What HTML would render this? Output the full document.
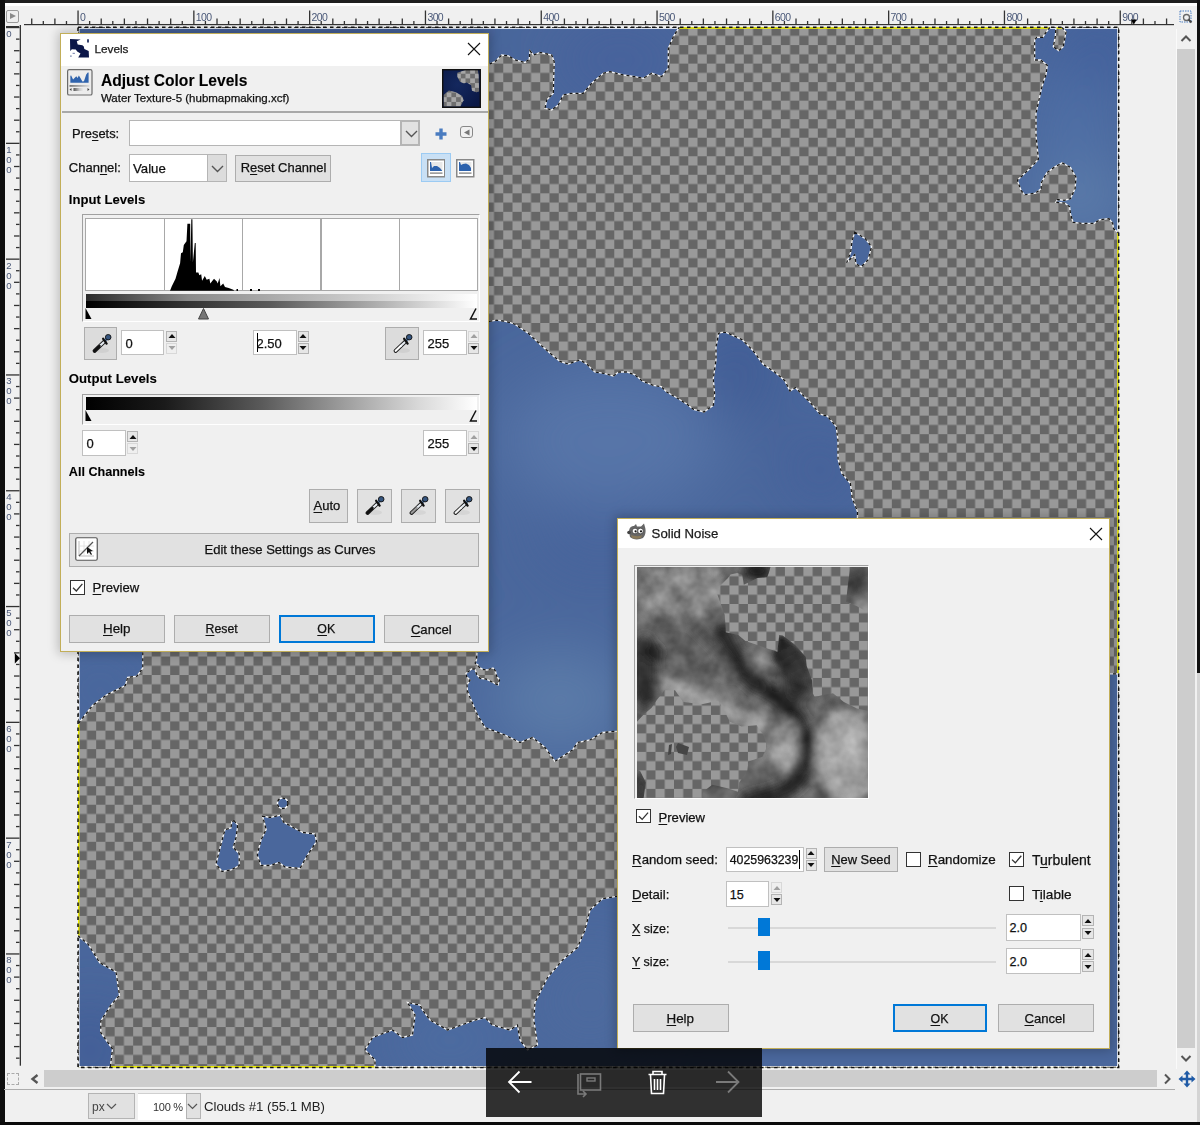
<!DOCTYPE html><html><head><meta charset="utf-8"><style>html,body{margin:0;padding:0;width:1200px;height:1125px;overflow:hidden;background:#f0f0f0;position:relative;font-family:"Liberation Sans",sans-serif}</style></head><body>
<svg width="1200" height="1125" style="position:absolute;left:0;top:0">
<defs>
<pattern id="chk" x="77.66" y="26.56" width="18.504" height="18.528" patternUnits="userSpaceOnUse"><rect width="18.504" height="18.528" fill="#999"/><rect x="9.252" width="9.252" height="9.264" fill="#666"/><rect y="9.264" width="9.252" height="9.264" fill="#666"/></pattern>
<clipPath id="water"><path d="M78.0,27.3 L679.2,27.3 L673.3,36.7 L668.3,48.3 L668.3,68.3 L661.7,76.7 L651.7,73.3 L643.3,78.3 L635.0,76.7 L623.3,75.0 L610.0,71.7 L603.3,73.3 L591.7,83.3 L583.3,93.3 L571.7,93.3 L563.3,95.0 L558.3,105.0 L551.7,110.0 L545.0,108.3 L546.7,100.0 L553.3,93.3 L554.2,61.7 L551.7,55.0 L540.0,52.5 L533.3,55.0 L530.0,50.8 L529.2,59.2 L525.0,62.5 L515.0,60.0 L508.3,55.8 L501.7,55.0 L495.0,61.7 L489.2,64.2 L470.0,64.0 L470.0,40.0 L78.0,40.0 Z M1050.0,27.3 L1045.3,33.3 L1042.7,37.3 L1036.7,37.3 L1034.7,40.0 L1034.7,60.0 L1040.7,60.0 L1047.3,65.3 L1046.0,74.7 L1044.0,80.0 L1041.3,89.3 L1036.0,113.3 L1036.0,134.7 L1037.5,150.0 L1038.4,159.2 L1030.2,168.3 L1017.3,180.2 L1021.0,190.3 L1024.7,194.9 L1035.7,193.1 L1041.2,188.5 L1041.2,183.0 L1046.7,172.9 L1054.0,167.4 L1062.2,162.8 L1070.5,167.4 L1076.0,177.5 L1075.1,188.5 L1070.5,198.6 L1064.1,200.4 L1057.7,199.5 L1055.8,202.2 L1065.0,203.2 L1069.6,206.8 L1070.5,214.2 L1073.2,222.4 L1081.5,223.3 L1094.3,223.3 L1099.8,219.7 L1109.0,218.7 L1112.7,223.3 L1113.6,228.8 L1118.7,233.0 L1118.7,27.3 L1062.0,27.3 L1066.0,32.0 L1063.3,46.7 L1058.7,50.7 L1053.3,46.7 L1055.3,36.7 L1056.0,27.3 Z M489.3,321.3 L496.7,320.2 L505.6,321.3 L514.4,324.0 L527.8,332.9 L541.0,345.3 L554.4,356.9 L560.0,361.3 L568.0,364.0 L580.0,360.0 L586.7,364.0 L594.7,372.0 L604.0,373.3 L613.3,376.0 L618.7,372.0 L626.7,372.0 L634.7,374.7 L642.7,381.3 L653.3,385.3 L661.3,386.7 L666.7,392.0 L676.0,397.3 L686.7,404.0 L693.3,409.3 L704.0,412.0 L713.3,405.3 L714.7,394.7 L713.3,378.7 L716.0,360.0 L716.0,346.7 L718.7,333.3 L722.0,332.4 L726.0,332.4 L742.0,339.6 L752.7,350.2 L763.3,364.4 L774.0,371.6 L784.7,380.4 L790.0,391.1 L795.3,387.6 L809.6,401.8 L820.2,414.2 L827.3,416.0 L836.2,426.7 L838.0,440.9 L838.0,458.7 L841.6,472.9 L850.4,483.6 L852.2,497.8 L857.6,512.0 L857.0,530.0 L630.0,530.0 L630.0,731.3 L616.3,731.3 L602.5,732.5 L590.0,740.0 L577.5,742.5 L572.5,750.0 L555.0,761.3 L545.0,747.5 L532.5,737.5 L520.0,742.5 L505.0,735.0 L485.0,727.5 L477.5,715.0 L470.0,697.5 L467.5,691.0 L467.0,685.0 L470.0,680.0 L466.5,676.5 L466.0,673.5 L471.5,669.0 L475.0,669.0 L476.5,674.0 L480.0,678.5 L486.0,679.0 L492.0,682.0 L498.0,685.0 L499.5,680.0 L496.5,676.0 L495.5,671.0 L493.0,668.0 L487.0,670.0 L483.0,669.5 L479.0,667.0 L478.0,665.0 L476.5,664.0 L475.0,663.0 L476.5,660.0 L477.0,653.0 L477.5,645.0 L480.0,645.0 L480.0,321.3 Z M630.0,896.3 L616.3,896.3 L602.5,898.8 L590.0,910.0 L585.0,930.0 L577.5,947.5 L562.5,960.0 L547.5,977.5 L535.0,1002.5 L533.8,1020.0 L537.5,1045.0 L527.5,1050.0 L520.0,1040.0 L517.5,1025.0 L510.0,1030.0 L492.5,1025.0 L485.0,1017.5 L475.0,1020.0 L447.5,1030.0 L430.0,1020.0 L422.5,1010.0 L420.0,1005.0 L407.5,1002.5 L415.0,1015.0 L412.5,1035.0 L402.5,1037.5 L392.5,1030.0 L372.5,1037.5 L365.0,1050.0 L375.0,1060.0 L375.0,1067.5 L1118.7,1067.5 L1118.7,673.8 L1100.0,673.8 L1100.0,1040.0 L630.0,1040.0 Z M78.0,645.0 L142.8,645.0 L142.8,668.0 L137.0,676.2 L127.7,677.3 L125.3,685.5 L106.7,694.8 L92.7,705.3 L78.0,724.0 Z M78.0,935.8 L88.0,944.0 L99.7,962.7 L116.0,972.0 L119.5,995.3 L111.3,1004.7 L100.8,1021.0 L100.8,1032.7 L112.5,1049.0 L110.2,1067.5 L78.0,1067.5 Z M234.0,820.5 L237.7,825.0 L236.2,837.0 L233.2,847.5 L239.2,853.5 L239.2,865.5 L231.0,870.0 L222.0,871.5 L216.0,864.0 L220.5,846.0 L225.0,829.5 L231.0,828.0 L231.7,822.0 Z M262.5,816.0 L270.0,817.5 L280.5,815.2 L283.5,822.0 L294.0,828.0 L303.0,832.5 L315.0,834.0 L316.5,841.5 L307.5,855.0 L300.0,868.5 L285.0,867.0 L279.0,862.5 L270.0,865.5 L261.0,865.5 L257.2,855.0 L261.0,840.0 L266.2,829.5 Z M854.7,232.0 L865.3,238.7 L871.5,246.7 L868.0,260.0 L861.3,266.7 L856.0,264.0 L854.7,254.7 L846.7,262.7 L850.7,252.0 L852.0,241.3 Z" clip-rule="evenodd"/><circle cx="282.7" cy="803.2" r="5.3"/></clipPath>
<clipPath id="cv"><rect x="78" y="27.3" width="1040.7" height="1040.2"/></clipPath>
<filter id="bb" x="-50%" y="-50%" width="200%" height="200%"><feGaussianBlur stdDeviation="30"/></filter>
</defs>
<rect x="78.0" y="27.3" width="1040.7" height="1040.2" fill="url(#chk)"/>
<g clip-path="url(#cv)"><rect x="78.0" y="27.3" width="1040.7" height="1040.2" fill="none" stroke="#ee0" stroke-width="3"/></g>
<g clip-path="url(#cv)"><g clip-path="url(#water)">
<rect x="78" y="27" width="1041" height="1041" fill="#4a679c"/>
<g filter="url(#bb)">
<ellipse cx="610" cy="440" rx="110" ry="70" fill="#5675a8"/>
<ellipse cx="560" cy="700" rx="70" ry="50" fill="#5c7ba9"/>
<ellipse cx="1100" cy="50" rx="50" ry="40" fill="#42609c"/>
<ellipse cx="740" cy="370" rx="40" ry="50" fill="#415b94"/>
<ellipse cx="820" cy="470" rx="40" ry="40" fill="#45619a"/>
<ellipse cx="1080" cy="200" rx="50" ry="40" fill="#5d7eab"/>
<ellipse cx="1075" cy="125" rx="40" ry="50" fill="#5070a6"/>
<ellipse cx="600" cy="540" rx="70" ry="35" fill="#47639b"/>
<ellipse cx="90" cy="1050" rx="40" ry="40" fill="#405b95"/>
<ellipse cx="590" cy="1000" rx="60" ry="60" fill="#4d6a9e"/>
<ellipse cx="450" cy="1040" rx="60" ry="30" fill="#4e6da2"/>
<ellipse cx="280" cy="25" rx="220" ry="20" fill="#3c5690"/>
<ellipse cx="620" cy="60" rx="70" ry="40" fill="#46629c"/>
<ellipse cx="100" cy="690" rx="40" ry="30" fill="#4a679e"/>
</g>
<rect x="78.0" y="27.3" width="1040.7" height="1040.2" fill="none" stroke="#fff" stroke-width="3"/>
</g>
<path d="M78.0,27.3 L679.2,27.3 L673.3,36.7 L668.3,48.3 L668.3,68.3 L661.7,76.7 L651.7,73.3 L643.3,78.3 L635.0,76.7 L623.3,75.0 L610.0,71.7 L603.3,73.3 L591.7,83.3 L583.3,93.3 L571.7,93.3 L563.3,95.0 L558.3,105.0 L551.7,110.0 L545.0,108.3 L546.7,100.0 L553.3,93.3 L554.2,61.7 L551.7,55.0 L540.0,52.5 L533.3,55.0 L530.0,50.8 L529.2,59.2 L525.0,62.5 L515.0,60.0 L508.3,55.8 L501.7,55.0 L495.0,61.7 L489.2,64.2 L470.0,64.0 L470.0,40.0 L78.0,40.0 Z M1050.0,27.3 L1045.3,33.3 L1042.7,37.3 L1036.7,37.3 L1034.7,40.0 L1034.7,60.0 L1040.7,60.0 L1047.3,65.3 L1046.0,74.7 L1044.0,80.0 L1041.3,89.3 L1036.0,113.3 L1036.0,134.7 L1037.5,150.0 L1038.4,159.2 L1030.2,168.3 L1017.3,180.2 L1021.0,190.3 L1024.7,194.9 L1035.7,193.1 L1041.2,188.5 L1041.2,183.0 L1046.7,172.9 L1054.0,167.4 L1062.2,162.8 L1070.5,167.4 L1076.0,177.5 L1075.1,188.5 L1070.5,198.6 L1064.1,200.4 L1057.7,199.5 L1055.8,202.2 L1065.0,203.2 L1069.6,206.8 L1070.5,214.2 L1073.2,222.4 L1081.5,223.3 L1094.3,223.3 L1099.8,219.7 L1109.0,218.7 L1112.7,223.3 L1113.6,228.8 L1118.7,233.0 L1118.7,27.3 L1062.0,27.3 L1066.0,32.0 L1063.3,46.7 L1058.7,50.7 L1053.3,46.7 L1055.3,36.7 L1056.0,27.3 Z M489.3,321.3 L496.7,320.2 L505.6,321.3 L514.4,324.0 L527.8,332.9 L541.0,345.3 L554.4,356.9 L560.0,361.3 L568.0,364.0 L580.0,360.0 L586.7,364.0 L594.7,372.0 L604.0,373.3 L613.3,376.0 L618.7,372.0 L626.7,372.0 L634.7,374.7 L642.7,381.3 L653.3,385.3 L661.3,386.7 L666.7,392.0 L676.0,397.3 L686.7,404.0 L693.3,409.3 L704.0,412.0 L713.3,405.3 L714.7,394.7 L713.3,378.7 L716.0,360.0 L716.0,346.7 L718.7,333.3 L722.0,332.4 L726.0,332.4 L742.0,339.6 L752.7,350.2 L763.3,364.4 L774.0,371.6 L784.7,380.4 L790.0,391.1 L795.3,387.6 L809.6,401.8 L820.2,414.2 L827.3,416.0 L836.2,426.7 L838.0,440.9 L838.0,458.7 L841.6,472.9 L850.4,483.6 L852.2,497.8 L857.6,512.0 L857.0,530.0 L630.0,530.0 L630.0,731.3 L616.3,731.3 L602.5,732.5 L590.0,740.0 L577.5,742.5 L572.5,750.0 L555.0,761.3 L545.0,747.5 L532.5,737.5 L520.0,742.5 L505.0,735.0 L485.0,727.5 L477.5,715.0 L470.0,697.5 L467.5,691.0 L467.0,685.0 L470.0,680.0 L466.5,676.5 L466.0,673.5 L471.5,669.0 L475.0,669.0 L476.5,674.0 L480.0,678.5 L486.0,679.0 L492.0,682.0 L498.0,685.0 L499.5,680.0 L496.5,676.0 L495.5,671.0 L493.0,668.0 L487.0,670.0 L483.0,669.5 L479.0,667.0 L478.0,665.0 L476.5,664.0 L475.0,663.0 L476.5,660.0 L477.0,653.0 L477.5,645.0 L480.0,645.0 L480.0,321.3 Z M630.0,896.3 L616.3,896.3 L602.5,898.8 L590.0,910.0 L585.0,930.0 L577.5,947.5 L562.5,960.0 L547.5,977.5 L535.0,1002.5 L533.8,1020.0 L537.5,1045.0 L527.5,1050.0 L520.0,1040.0 L517.5,1025.0 L510.0,1030.0 L492.5,1025.0 L485.0,1017.5 L475.0,1020.0 L447.5,1030.0 L430.0,1020.0 L422.5,1010.0 L420.0,1005.0 L407.5,1002.5 L415.0,1015.0 L412.5,1035.0 L402.5,1037.5 L392.5,1030.0 L372.5,1037.5 L365.0,1050.0 L375.0,1060.0 L375.0,1067.5 L1118.7,1067.5 L1118.7,673.8 L1100.0,673.8 L1100.0,1040.0 L630.0,1040.0 Z M78.0,645.0 L142.8,645.0 L142.8,668.0 L137.0,676.2 L127.7,677.3 L125.3,685.5 L106.7,694.8 L92.7,705.3 L78.0,724.0 Z M78.0,935.8 L88.0,944.0 L99.7,962.7 L116.0,972.0 L119.5,995.3 L111.3,1004.7 L100.8,1021.0 L100.8,1032.7 L112.5,1049.0 L110.2,1067.5 L78.0,1067.5 Z M234.0,820.5 L237.7,825.0 L236.2,837.0 L233.2,847.5 L239.2,853.5 L239.2,865.5 L231.0,870.0 L222.0,871.5 L216.0,864.0 L220.5,846.0 L225.0,829.5 L231.0,828.0 L231.7,822.0 Z M262.5,816.0 L270.0,817.5 L280.5,815.2 L283.5,822.0 L294.0,828.0 L303.0,832.5 L315.0,834.0 L316.5,841.5 L307.5,855.0 L300.0,868.5 L285.0,867.0 L279.0,862.5 L270.0,865.5 L261.0,865.5 L257.2,855.0 L261.0,840.0 L266.2,829.5 Z M854.7,232.0 L865.3,238.7 L871.5,246.7 L868.0,260.0 L861.3,266.7 L856.0,264.0 L854.7,254.7 L846.7,262.7 L850.7,252.0 L852.0,241.3 Z" fill="none" stroke="#f4f4f4" stroke-width="1.3"/><path d="M78.0,27.3 L679.2,27.3 L673.3,36.7 L668.3,48.3 L668.3,68.3 L661.7,76.7 L651.7,73.3 L643.3,78.3 L635.0,76.7 L623.3,75.0 L610.0,71.7 L603.3,73.3 L591.7,83.3 L583.3,93.3 L571.7,93.3 L563.3,95.0 L558.3,105.0 L551.7,110.0 L545.0,108.3 L546.7,100.0 L553.3,93.3 L554.2,61.7 L551.7,55.0 L540.0,52.5 L533.3,55.0 L530.0,50.8 L529.2,59.2 L525.0,62.5 L515.0,60.0 L508.3,55.8 L501.7,55.0 L495.0,61.7 L489.2,64.2 L470.0,64.0 L470.0,40.0 L78.0,40.0 Z M1050.0,27.3 L1045.3,33.3 L1042.7,37.3 L1036.7,37.3 L1034.7,40.0 L1034.7,60.0 L1040.7,60.0 L1047.3,65.3 L1046.0,74.7 L1044.0,80.0 L1041.3,89.3 L1036.0,113.3 L1036.0,134.7 L1037.5,150.0 L1038.4,159.2 L1030.2,168.3 L1017.3,180.2 L1021.0,190.3 L1024.7,194.9 L1035.7,193.1 L1041.2,188.5 L1041.2,183.0 L1046.7,172.9 L1054.0,167.4 L1062.2,162.8 L1070.5,167.4 L1076.0,177.5 L1075.1,188.5 L1070.5,198.6 L1064.1,200.4 L1057.7,199.5 L1055.8,202.2 L1065.0,203.2 L1069.6,206.8 L1070.5,214.2 L1073.2,222.4 L1081.5,223.3 L1094.3,223.3 L1099.8,219.7 L1109.0,218.7 L1112.7,223.3 L1113.6,228.8 L1118.7,233.0 L1118.7,27.3 L1062.0,27.3 L1066.0,32.0 L1063.3,46.7 L1058.7,50.7 L1053.3,46.7 L1055.3,36.7 L1056.0,27.3 Z M489.3,321.3 L496.7,320.2 L505.6,321.3 L514.4,324.0 L527.8,332.9 L541.0,345.3 L554.4,356.9 L560.0,361.3 L568.0,364.0 L580.0,360.0 L586.7,364.0 L594.7,372.0 L604.0,373.3 L613.3,376.0 L618.7,372.0 L626.7,372.0 L634.7,374.7 L642.7,381.3 L653.3,385.3 L661.3,386.7 L666.7,392.0 L676.0,397.3 L686.7,404.0 L693.3,409.3 L704.0,412.0 L713.3,405.3 L714.7,394.7 L713.3,378.7 L716.0,360.0 L716.0,346.7 L718.7,333.3 L722.0,332.4 L726.0,332.4 L742.0,339.6 L752.7,350.2 L763.3,364.4 L774.0,371.6 L784.7,380.4 L790.0,391.1 L795.3,387.6 L809.6,401.8 L820.2,414.2 L827.3,416.0 L836.2,426.7 L838.0,440.9 L838.0,458.7 L841.6,472.9 L850.4,483.6 L852.2,497.8 L857.6,512.0 L857.0,530.0 L630.0,530.0 L630.0,731.3 L616.3,731.3 L602.5,732.5 L590.0,740.0 L577.5,742.5 L572.5,750.0 L555.0,761.3 L545.0,747.5 L532.5,737.5 L520.0,742.5 L505.0,735.0 L485.0,727.5 L477.5,715.0 L470.0,697.5 L467.5,691.0 L467.0,685.0 L470.0,680.0 L466.5,676.5 L466.0,673.5 L471.5,669.0 L475.0,669.0 L476.5,674.0 L480.0,678.5 L486.0,679.0 L492.0,682.0 L498.0,685.0 L499.5,680.0 L496.5,676.0 L495.5,671.0 L493.0,668.0 L487.0,670.0 L483.0,669.5 L479.0,667.0 L478.0,665.0 L476.5,664.0 L475.0,663.0 L476.5,660.0 L477.0,653.0 L477.5,645.0 L480.0,645.0 L480.0,321.3 Z M630.0,896.3 L616.3,896.3 L602.5,898.8 L590.0,910.0 L585.0,930.0 L577.5,947.5 L562.5,960.0 L547.5,977.5 L535.0,1002.5 L533.8,1020.0 L537.5,1045.0 L527.5,1050.0 L520.0,1040.0 L517.5,1025.0 L510.0,1030.0 L492.5,1025.0 L485.0,1017.5 L475.0,1020.0 L447.5,1030.0 L430.0,1020.0 L422.5,1010.0 L420.0,1005.0 L407.5,1002.5 L415.0,1015.0 L412.5,1035.0 L402.5,1037.5 L392.5,1030.0 L372.5,1037.5 L365.0,1050.0 L375.0,1060.0 L375.0,1067.5 L1118.7,1067.5 L1118.7,673.8 L1100.0,673.8 L1100.0,1040.0 L630.0,1040.0 Z M78.0,645.0 L142.8,645.0 L142.8,668.0 L137.0,676.2 L127.7,677.3 L125.3,685.5 L106.7,694.8 L92.7,705.3 L78.0,724.0 Z M78.0,935.8 L88.0,944.0 L99.7,962.7 L116.0,972.0 L119.5,995.3 L111.3,1004.7 L100.8,1021.0 L100.8,1032.7 L112.5,1049.0 L110.2,1067.5 L78.0,1067.5 Z M234.0,820.5 L237.7,825.0 L236.2,837.0 L233.2,847.5 L239.2,853.5 L239.2,865.5 L231.0,870.0 L222.0,871.5 L216.0,864.0 L220.5,846.0 L225.0,829.5 L231.0,828.0 L231.7,822.0 Z M262.5,816.0 L270.0,817.5 L280.5,815.2 L283.5,822.0 L294.0,828.0 L303.0,832.5 L315.0,834.0 L316.5,841.5 L307.5,855.0 L300.0,868.5 L285.0,867.0 L279.0,862.5 L270.0,865.5 L261.0,865.5 L257.2,855.0 L261.0,840.0 L266.2,829.5 Z M854.7,232.0 L865.3,238.7 L871.5,246.7 L868.0,260.0 L861.3,266.7 L856.0,264.0 L854.7,254.7 L846.7,262.7 L850.7,252.0 L852.0,241.3 Z" fill="none" stroke="#151515" stroke-width="1.3" stroke-dasharray="3 3"/>
<circle cx="282.7" cy="803.2" r="5.3" fill="none" stroke="#fff" stroke-width="1.5"/><circle cx="282.7" cy="803.2" r="5.3" fill="none" stroke="#111" stroke-width="1.5" stroke-dasharray="3 3"/>
</g>
<rect x="78.0" y="27.3" width="1040.7" height="1040.2" fill="none" stroke="#111" stroke-width="1.5" stroke-dasharray="3.5 3.5"/>
</svg>
<svg width="1200" height="1125" style="position:absolute;left:0;top:0">
<rect x="24" y="24" width="1150" height="1.2" fill="#333"/>
<rect x="31.08" y="18.5" width="1.3" height="6" fill="#333"/>
<rect x="42.66" y="21" width="1.3" height="3.5" fill="#333"/>
<rect x="54.24" y="18.5" width="1.3" height="6" fill="#333"/>
<rect x="65.82" y="21" width="1.3" height="3.5" fill="#333"/>
<rect x="77.40" y="10.5" width="1.3" height="14" fill="#333"/>
<text x="80.0" y="20.5" font-family="Liberation Sans" font-size="10.5" fill="#4a5878" letter-spacing="-0.6">0</text>
<rect x="88.98" y="21" width="1.3" height="3.5" fill="#333"/>
<rect x="100.56" y="18.5" width="1.3" height="6" fill="#333"/>
<rect x="112.14" y="21" width="1.3" height="3.5" fill="#333"/>
<rect x="123.72" y="18.5" width="1.3" height="6" fill="#333"/>
<rect x="135.30" y="21" width="1.3" height="3.5" fill="#333"/>
<rect x="146.88" y="18.5" width="1.3" height="6" fill="#333"/>
<rect x="158.46" y="21" width="1.3" height="3.5" fill="#333"/>
<rect x="170.04" y="18.5" width="1.3" height="6" fill="#333"/>
<rect x="181.62" y="21" width="1.3" height="3.5" fill="#333"/>
<rect x="193.20" y="10.5" width="1.3" height="14" fill="#333"/>
<text x="195.8" y="20.5" font-family="Liberation Sans" font-size="10.5" fill="#4a5878" letter-spacing="-0.6">100</text>
<rect x="204.78" y="21" width="1.3" height="3.5" fill="#333"/>
<rect x="216.36" y="18.5" width="1.3" height="6" fill="#333"/>
<rect x="227.94" y="21" width="1.3" height="3.5" fill="#333"/>
<rect x="239.52" y="18.5" width="1.3" height="6" fill="#333"/>
<rect x="251.10" y="21" width="1.3" height="3.5" fill="#333"/>
<rect x="262.68" y="18.5" width="1.3" height="6" fill="#333"/>
<rect x="274.26" y="21" width="1.3" height="3.5" fill="#333"/>
<rect x="285.84" y="18.5" width="1.3" height="6" fill="#333"/>
<rect x="297.42" y="21" width="1.3" height="3.5" fill="#333"/>
<rect x="309.00" y="10.5" width="1.3" height="14" fill="#333"/>
<text x="311.6" y="20.5" font-family="Liberation Sans" font-size="10.5" fill="#4a5878" letter-spacing="-0.6">200</text>
<rect x="320.58" y="21" width="1.3" height="3.5" fill="#333"/>
<rect x="332.16" y="18.5" width="1.3" height="6" fill="#333"/>
<rect x="343.74" y="21" width="1.3" height="3.5" fill="#333"/>
<rect x="355.32" y="18.5" width="1.3" height="6" fill="#333"/>
<rect x="366.90" y="21" width="1.3" height="3.5" fill="#333"/>
<rect x="378.48" y="18.5" width="1.3" height="6" fill="#333"/>
<rect x="390.06" y="21" width="1.3" height="3.5" fill="#333"/>
<rect x="401.64" y="18.5" width="1.3" height="6" fill="#333"/>
<rect x="413.22" y="21" width="1.3" height="3.5" fill="#333"/>
<rect x="424.80" y="10.5" width="1.3" height="14" fill="#333"/>
<text x="427.4" y="20.5" font-family="Liberation Sans" font-size="10.5" fill="#4a5878" letter-spacing="-0.6">300</text>
<rect x="436.38" y="21" width="1.3" height="3.5" fill="#333"/>
<rect x="447.96" y="18.5" width="1.3" height="6" fill="#333"/>
<rect x="459.54" y="21" width="1.3" height="3.5" fill="#333"/>
<rect x="471.12" y="18.5" width="1.3" height="6" fill="#333"/>
<rect x="482.70" y="21" width="1.3" height="3.5" fill="#333"/>
<rect x="494.28" y="18.5" width="1.3" height="6" fill="#333"/>
<rect x="505.86" y="21" width="1.3" height="3.5" fill="#333"/>
<rect x="517.44" y="18.5" width="1.3" height="6" fill="#333"/>
<rect x="529.02" y="21" width="1.3" height="3.5" fill="#333"/>
<rect x="540.60" y="10.5" width="1.3" height="14" fill="#333"/>
<text x="543.2" y="20.5" font-family="Liberation Sans" font-size="10.5" fill="#4a5878" letter-spacing="-0.6">400</text>
<rect x="552.18" y="21" width="1.3" height="3.5" fill="#333"/>
<rect x="563.76" y="18.5" width="1.3" height="6" fill="#333"/>
<rect x="575.34" y="21" width="1.3" height="3.5" fill="#333"/>
<rect x="586.92" y="18.5" width="1.3" height="6" fill="#333"/>
<rect x="598.50" y="21" width="1.3" height="3.5" fill="#333"/>
<rect x="610.08" y="18.5" width="1.3" height="6" fill="#333"/>
<rect x="621.66" y="21" width="1.3" height="3.5" fill="#333"/>
<rect x="633.24" y="18.5" width="1.3" height="6" fill="#333"/>
<rect x="644.82" y="21" width="1.3" height="3.5" fill="#333"/>
<rect x="656.40" y="10.5" width="1.3" height="14" fill="#333"/>
<text x="659.0" y="20.5" font-family="Liberation Sans" font-size="10.5" fill="#4a5878" letter-spacing="-0.6">500</text>
<rect x="667.98" y="21" width="1.3" height="3.5" fill="#333"/>
<rect x="679.56" y="18.5" width="1.3" height="6" fill="#333"/>
<rect x="691.14" y="21" width="1.3" height="3.5" fill="#333"/>
<rect x="702.72" y="18.5" width="1.3" height="6" fill="#333"/>
<rect x="714.30" y="21" width="1.3" height="3.5" fill="#333"/>
<rect x="725.88" y="18.5" width="1.3" height="6" fill="#333"/>
<rect x="737.46" y="21" width="1.3" height="3.5" fill="#333"/>
<rect x="749.04" y="18.5" width="1.3" height="6" fill="#333"/>
<rect x="760.62" y="21" width="1.3" height="3.5" fill="#333"/>
<rect x="772.20" y="10.5" width="1.3" height="14" fill="#333"/>
<text x="774.8" y="20.5" font-family="Liberation Sans" font-size="10.5" fill="#4a5878" letter-spacing="-0.6">600</text>
<rect x="783.78" y="21" width="1.3" height="3.5" fill="#333"/>
<rect x="795.36" y="18.5" width="1.3" height="6" fill="#333"/>
<rect x="806.94" y="21" width="1.3" height="3.5" fill="#333"/>
<rect x="818.52" y="18.5" width="1.3" height="6" fill="#333"/>
<rect x="830.10" y="21" width="1.3" height="3.5" fill="#333"/>
<rect x="841.68" y="18.5" width="1.3" height="6" fill="#333"/>
<rect x="853.26" y="21" width="1.3" height="3.5" fill="#333"/>
<rect x="864.84" y="18.5" width="1.3" height="6" fill="#333"/>
<rect x="876.42" y="21" width="1.3" height="3.5" fill="#333"/>
<rect x="888.00" y="10.5" width="1.3" height="14" fill="#333"/>
<text x="890.6" y="20.5" font-family="Liberation Sans" font-size="10.5" fill="#4a5878" letter-spacing="-0.6">700</text>
<rect x="899.58" y="21" width="1.3" height="3.5" fill="#333"/>
<rect x="911.16" y="18.5" width="1.3" height="6" fill="#333"/>
<rect x="922.74" y="21" width="1.3" height="3.5" fill="#333"/>
<rect x="934.32" y="18.5" width="1.3" height="6" fill="#333"/>
<rect x="945.90" y="21" width="1.3" height="3.5" fill="#333"/>
<rect x="957.48" y="18.5" width="1.3" height="6" fill="#333"/>
<rect x="969.06" y="21" width="1.3" height="3.5" fill="#333"/>
<rect x="980.64" y="18.5" width="1.3" height="6" fill="#333"/>
<rect x="992.22" y="21" width="1.3" height="3.5" fill="#333"/>
<rect x="1003.80" y="10.5" width="1.3" height="14" fill="#333"/>
<text x="1006.4" y="20.5" font-family="Liberation Sans" font-size="10.5" fill="#4a5878" letter-spacing="-0.6">800</text>
<rect x="1015.38" y="21" width="1.3" height="3.5" fill="#333"/>
<rect x="1026.96" y="18.5" width="1.3" height="6" fill="#333"/>
<rect x="1038.54" y="21" width="1.3" height="3.5" fill="#333"/>
<rect x="1050.12" y="18.5" width="1.3" height="6" fill="#333"/>
<rect x="1061.70" y="21" width="1.3" height="3.5" fill="#333"/>
<rect x="1073.28" y="18.5" width="1.3" height="6" fill="#333"/>
<rect x="1084.86" y="21" width="1.3" height="3.5" fill="#333"/>
<rect x="1096.44" y="18.5" width="1.3" height="6" fill="#333"/>
<rect x="1108.02" y="21" width="1.3" height="3.5" fill="#333"/>
<rect x="1119.60" y="10.5" width="1.3" height="14" fill="#333"/>
<text x="1122.2" y="20.5" font-family="Liberation Sans" font-size="10.5" fill="#4a5878" letter-spacing="-0.6">900</text>
<rect x="1131.18" y="21" width="1.3" height="3.5" fill="#333"/>
<rect x="1142.76" y="18.5" width="1.3" height="6" fill="#333"/>
<rect x="1154.34" y="21" width="1.3" height="3.5" fill="#333"/>
<rect x="1165.92" y="18.5" width="1.3" height="6" fill="#333"/>
<rect x="19.7" y="25" width="1.3" height="1040.7" fill="#333"/>
<rect x="6" y="26" width="13" height="1.2" fill="#333"/>
<rect x="6" y="26.90" width="13.5" height="1.3" fill="#333"/>
<text x="6.3" y="37.0" font-family="Liberation Sans" font-size="9.6" fill="#4a5878">0</text>
<rect x="16" y="38.48" width="3.5" height="1.3" fill="#333"/>
<rect x="14" y="50.06" width="5.5" height="1.3" fill="#333"/>
<rect x="16" y="61.64" width="3.5" height="1.3" fill="#333"/>
<rect x="14" y="73.22" width="5.5" height="1.3" fill="#333"/>
<rect x="16" y="84.80" width="3.5" height="1.3" fill="#333"/>
<rect x="14" y="96.38" width="5.5" height="1.3" fill="#333"/>
<rect x="16" y="107.96" width="3.5" height="1.3" fill="#333"/>
<rect x="14" y="119.54" width="5.5" height="1.3" fill="#333"/>
<rect x="16" y="131.12" width="3.5" height="1.3" fill="#333"/>
<rect x="6" y="142.70" width="13.5" height="1.3" fill="#333"/>
<text x="6.3" y="152.8" font-family="Liberation Sans" font-size="9.6" fill="#4a5878">1</text>
<text x="6.3" y="162.8" font-family="Liberation Sans" font-size="9.6" fill="#4a5878">0</text>
<text x="6.3" y="172.8" font-family="Liberation Sans" font-size="9.6" fill="#4a5878">0</text>
<rect x="16" y="154.28" width="3.5" height="1.3" fill="#333"/>
<rect x="14" y="165.86" width="5.5" height="1.3" fill="#333"/>
<rect x="16" y="177.44" width="3.5" height="1.3" fill="#333"/>
<rect x="14" y="189.02" width="5.5" height="1.3" fill="#333"/>
<rect x="16" y="200.60" width="3.5" height="1.3" fill="#333"/>
<rect x="14" y="212.18" width="5.5" height="1.3" fill="#333"/>
<rect x="16" y="223.76" width="3.5" height="1.3" fill="#333"/>
<rect x="14" y="235.34" width="5.5" height="1.3" fill="#333"/>
<rect x="16" y="246.92" width="3.5" height="1.3" fill="#333"/>
<rect x="6" y="258.50" width="13.5" height="1.3" fill="#333"/>
<text x="6.3" y="268.6" font-family="Liberation Sans" font-size="9.6" fill="#4a5878">2</text>
<text x="6.3" y="278.6" font-family="Liberation Sans" font-size="9.6" fill="#4a5878">0</text>
<text x="6.3" y="288.6" font-family="Liberation Sans" font-size="9.6" fill="#4a5878">0</text>
<rect x="16" y="270.08" width="3.5" height="1.3" fill="#333"/>
<rect x="14" y="281.66" width="5.5" height="1.3" fill="#333"/>
<rect x="16" y="293.24" width="3.5" height="1.3" fill="#333"/>
<rect x="14" y="304.82" width="5.5" height="1.3" fill="#333"/>
<rect x="16" y="316.40" width="3.5" height="1.3" fill="#333"/>
<rect x="14" y="327.98" width="5.5" height="1.3" fill="#333"/>
<rect x="16" y="339.56" width="3.5" height="1.3" fill="#333"/>
<rect x="14" y="351.14" width="5.5" height="1.3" fill="#333"/>
<rect x="16" y="362.72" width="3.5" height="1.3" fill="#333"/>
<rect x="6" y="374.30" width="13.5" height="1.3" fill="#333"/>
<text x="6.3" y="384.4" font-family="Liberation Sans" font-size="9.6" fill="#4a5878">3</text>
<text x="6.3" y="394.4" font-family="Liberation Sans" font-size="9.6" fill="#4a5878">0</text>
<text x="6.3" y="404.4" font-family="Liberation Sans" font-size="9.6" fill="#4a5878">0</text>
<rect x="16" y="385.88" width="3.5" height="1.3" fill="#333"/>
<rect x="14" y="397.46" width="5.5" height="1.3" fill="#333"/>
<rect x="16" y="409.04" width="3.5" height="1.3" fill="#333"/>
<rect x="14" y="420.62" width="5.5" height="1.3" fill="#333"/>
<rect x="16" y="432.20" width="3.5" height="1.3" fill="#333"/>
<rect x="14" y="443.78" width="5.5" height="1.3" fill="#333"/>
<rect x="16" y="455.36" width="3.5" height="1.3" fill="#333"/>
<rect x="14" y="466.94" width="5.5" height="1.3" fill="#333"/>
<rect x="16" y="478.52" width="3.5" height="1.3" fill="#333"/>
<rect x="6" y="490.10" width="13.5" height="1.3" fill="#333"/>
<text x="6.3" y="500.2" font-family="Liberation Sans" font-size="9.6" fill="#4a5878">4</text>
<text x="6.3" y="510.2" font-family="Liberation Sans" font-size="9.6" fill="#4a5878">0</text>
<text x="6.3" y="520.2" font-family="Liberation Sans" font-size="9.6" fill="#4a5878">0</text>
<rect x="16" y="501.68" width="3.5" height="1.3" fill="#333"/>
<rect x="14" y="513.26" width="5.5" height="1.3" fill="#333"/>
<rect x="16" y="524.84" width="3.5" height="1.3" fill="#333"/>
<rect x="14" y="536.42" width="5.5" height="1.3" fill="#333"/>
<rect x="16" y="548.00" width="3.5" height="1.3" fill="#333"/>
<rect x="14" y="559.58" width="5.5" height="1.3" fill="#333"/>
<rect x="16" y="571.16" width="3.5" height="1.3" fill="#333"/>
<rect x="14" y="582.74" width="5.5" height="1.3" fill="#333"/>
<rect x="16" y="594.32" width="3.5" height="1.3" fill="#333"/>
<rect x="6" y="605.90" width="13.5" height="1.3" fill="#333"/>
<text x="6.3" y="616.0" font-family="Liberation Sans" font-size="9.6" fill="#4a5878">5</text>
<text x="6.3" y="626.0" font-family="Liberation Sans" font-size="9.6" fill="#4a5878">0</text>
<text x="6.3" y="636.0" font-family="Liberation Sans" font-size="9.6" fill="#4a5878">0</text>
<rect x="16" y="617.48" width="3.5" height="1.3" fill="#333"/>
<rect x="14" y="629.06" width="5.5" height="1.3" fill="#333"/>
<rect x="16" y="640.64" width="3.5" height="1.3" fill="#333"/>
<rect x="14" y="652.22" width="5.5" height="1.3" fill="#333"/>
<rect x="16" y="663.80" width="3.5" height="1.3" fill="#333"/>
<rect x="14" y="675.38" width="5.5" height="1.3" fill="#333"/>
<rect x="16" y="686.96" width="3.5" height="1.3" fill="#333"/>
<rect x="14" y="698.54" width="5.5" height="1.3" fill="#333"/>
<rect x="16" y="710.12" width="3.5" height="1.3" fill="#333"/>
<rect x="6" y="721.70" width="13.5" height="1.3" fill="#333"/>
<text x="6.3" y="731.8" font-family="Liberation Sans" font-size="9.6" fill="#4a5878">6</text>
<text x="6.3" y="741.8" font-family="Liberation Sans" font-size="9.6" fill="#4a5878">0</text>
<text x="6.3" y="751.8" font-family="Liberation Sans" font-size="9.6" fill="#4a5878">0</text>
<rect x="16" y="733.28" width="3.5" height="1.3" fill="#333"/>
<rect x="14" y="744.86" width="5.5" height="1.3" fill="#333"/>
<rect x="16" y="756.44" width="3.5" height="1.3" fill="#333"/>
<rect x="14" y="768.02" width="5.5" height="1.3" fill="#333"/>
<rect x="16" y="779.60" width="3.5" height="1.3" fill="#333"/>
<rect x="14" y="791.18" width="5.5" height="1.3" fill="#333"/>
<rect x="16" y="802.76" width="3.5" height="1.3" fill="#333"/>
<rect x="14" y="814.34" width="5.5" height="1.3" fill="#333"/>
<rect x="16" y="825.92" width="3.5" height="1.3" fill="#333"/>
<rect x="6" y="837.50" width="13.5" height="1.3" fill="#333"/>
<text x="6.3" y="847.6" font-family="Liberation Sans" font-size="9.6" fill="#4a5878">7</text>
<text x="6.3" y="857.6" font-family="Liberation Sans" font-size="9.6" fill="#4a5878">0</text>
<text x="6.3" y="867.6" font-family="Liberation Sans" font-size="9.6" fill="#4a5878">0</text>
<rect x="16" y="849.08" width="3.5" height="1.3" fill="#333"/>
<rect x="14" y="860.66" width="5.5" height="1.3" fill="#333"/>
<rect x="16" y="872.24" width="3.5" height="1.3" fill="#333"/>
<rect x="14" y="883.82" width="5.5" height="1.3" fill="#333"/>
<rect x="16" y="895.40" width="3.5" height="1.3" fill="#333"/>
<rect x="14" y="906.98" width="5.5" height="1.3" fill="#333"/>
<rect x="16" y="918.56" width="3.5" height="1.3" fill="#333"/>
<rect x="14" y="930.14" width="5.5" height="1.3" fill="#333"/>
<rect x="16" y="941.72" width="3.5" height="1.3" fill="#333"/>
<rect x="6" y="953.30" width="13.5" height="1.3" fill="#333"/>
<text x="6.3" y="963.4" font-family="Liberation Sans" font-size="9.6" fill="#4a5878">8</text>
<text x="6.3" y="973.4" font-family="Liberation Sans" font-size="9.6" fill="#4a5878">0</text>
<text x="6.3" y="983.4" font-family="Liberation Sans" font-size="9.6" fill="#4a5878">0</text>
<rect x="16" y="964.88" width="3.5" height="1.3" fill="#333"/>
<rect x="14" y="976.46" width="5.5" height="1.3" fill="#333"/>
<rect x="16" y="988.04" width="3.5" height="1.3" fill="#333"/>
<rect x="14" y="999.62" width="5.5" height="1.3" fill="#333"/>
<rect x="16" y="1011.20" width="3.5" height="1.3" fill="#333"/>
<rect x="14" y="1022.78" width="5.5" height="1.3" fill="#333"/>
<rect x="16" y="1034.36" width="3.5" height="1.3" fill="#333"/>
<rect x="14" y="1045.94" width="5.5" height="1.3" fill="#333"/>
<rect x="16" y="1057.52" width="3.5" height="1.3" fill="#333"/>
<path d="M1130.8,19.5 L1136.8,19.5 L1133.8,24.5 Z" fill="#000"/>
<path d="M14.8,653 L20,658.3 L14.8,663.6 Z" fill="#000"/>
</svg>
<div style="position:absolute;left:0;top:0;width:1200px;height:3px;background:#1e1e1e"></div>
<div style="position:absolute;left:0;top:3px;width:1197px;height:2.5px;background:#fff"></div>
<div style="position:absolute;left:0;top:0;width:4.8px;height:1125px;background:#0e0e0e"></div>
<div style="position:absolute;left:1196.5px;top:0;width:4px;height:673px;background:#111"></div>
<div style="position:absolute;left:1196.5px;top:673px;width:4px;height:452px;background:#d4d4d4"></div>
<div style="position:absolute;left:0;top:1121.5px;width:1200px;height:4px;background:#0a0a0a"></div>
<div style="position:absolute;left:6px;top:9.5px;width:11px;height:11px;border:1px solid #9a9a9a;border-radius:2px;background:#eee"></div>
<div style="position:absolute;left:9.5px;top:12.5px;width:0;height:0;border-left:6px solid #8a8a8a;border-top:3.5px solid transparent;border-bottom:3.5px solid transparent"></div>
<div style="position:absolute;left:1177px;top:49px;width:17.5px;height:999px;background:#cdcdcd"></div>
<div style="position:absolute;left:1176px;top:29px;width:1px;height:1040px;background:#fafafa"></div>
<svg style="position:absolute;left:1177px;top:30px" width="18" height="18"><path d="M4.5,11 L9,6.5 L13.5,11" fill="none" stroke="#555" stroke-width="2"/></svg>
<svg style="position:absolute;left:1177px;top:1049px" width="18" height="18"><path d="M4.5,7 L9,11.5 L13.5,7" fill="none" stroke="#555" stroke-width="2"/></svg>
<svg style="position:absolute;left:1179px;top:10px" width="14" height="14"><rect x="1" y="1" width="11" height="11" fill="none" stroke="#4a7cc0" stroke-width="1" stroke-dasharray="1.5 1"/><circle cx="7.5" cy="7.5" r="3" fill="none" stroke="#666" stroke-width="1.3"/><path d="M9.5,9.5 L12.5,12.5" stroke="#444" stroke-width="2"/></svg>
<div style="position:absolute;left:44px;top:1070px;width:1113px;height:17px;background:#cdcdcd"></div>
<svg style="position:absolute;left:26px;top:1070px" width="18" height="18"><path d="M11.5,5 L6.5,9 L11.5,13" fill="none" stroke="#555" stroke-width="2.4"/></svg>
<svg style="position:absolute;left:1158px;top:1070px" width="18" height="18"><path d="M7,4.5 L11.5,9 L7,13.5" fill="none" stroke="#555" stroke-width="2"/></svg>
<div style="position:absolute;left:7px;top:1073px;width:10px;height:10px;border:1px dashed #aaa"></div>
<svg style="position:absolute;left:1178px;top:1070px" width="18" height="18"><g fill="#1f5aa6"><path d="M9,0.5 L12.5,4.5 L10.2,4.5 L10.2,7.8 L13.5,7.8 L13.5,5.5 L17.5,9 L13.5,12.5 L13.5,10.2 L10.2,10.2 L10.2,13.5 L12.5,13.5 L9,17.5 L5.5,13.5 L7.8,13.5 L7.8,10.2 L4.5,10.2 L4.5,12.5 L0.5,9 L4.5,5.5 L4.5,7.8 L7.8,7.8 L7.8,4.5 L5.5,4.5 Z"/></g></svg>
<div style="position:absolute;left:4px;top:1088.8px;width:1171px;height:1.6px;background:#acacac"></div>
<div style="position:absolute;left:88px;top:1092.5px;width:45px;height:24.5px;border:1px solid #b4b4b4;background:#e1e1e1"></div>
<div style="position:absolute;left:92px;top:1099.5px;font:12px 'Liberation Sans',sans-serif;color:#444">px</div>
<svg style="position:absolute;left:105px;top:1101px" width="14" height="10"><path d="M2,3 L6.5,7.5 L11,3" fill="none" stroke="#555" stroke-width="1.2"/></svg>
<div style="position:absolute;left:138px;top:1092.5px;width:48px;height:26px;background:#fff;border-top:1px solid #d0d0d0"></div>
<div style="position:absolute;left:186px;top:1092.5px;width:13px;height:24.5px;border:1px solid #b4b4b4;background:#e1e1e1"></div>
<div style="position:absolute;left:153px;top:1100.5px;font:11px 'Liberation Sans',sans-serif;color:#333;letter-spacing:-0.3px">100 %</div>
<svg style="position:absolute;left:186px;top:1101px" width="14" height="10"><path d="M2,3 L6.5,7.5 L11,3" fill="none" stroke="#555" stroke-width="1.2"/></svg>
<div style="position:absolute;left:204px;top:1099px;font:13.2px 'Liberation Sans',sans-serif;color:#222">Clouds #1 (55.1 MB)</div>
<div style="position:absolute;left:60px;top:33.3px;width:428.8px;height:618.7px;box-sizing:border-box;background:#f0f0f0;border:1px solid #c2ae58;box-shadow:0 0 10px 2px rgba(0,0,0,0.22);"></div>
<div style="position:absolute;left:61px;top:34.3px;width:426.8px;height:31.299999999999997px;box-sizing:border-box;background:#fff;"></div>
<svg style="position:absolute;left:70px;top:39px" width="19.5" height="19" viewBox="0 0 19.5 19"><path d="M0,0 L10.7,0.5 L6.8,2.3 L7.7,5.4 L12.4,6.3 L13.8,7.5 L14.3,10 L18.7,11.9 L19,18.4 L8.2,18.4 L10.5,14.5 L7.2,12.6 L5.8,10.5 L1.9,10.3 L0.2,11.9 Z" fill="#0b1648"/><rect x="17" y="0" width="2" height="3.7" rx="1" fill="#3a4670"/><rect x="2.6" y="13.8" width="2.3" height="1.1" fill="#7a86b0"/><rect x="0.2" y="16.3" width="1.4" height="1.7" fill="#8a96b8"/></svg>
<div style="position:absolute;left:94.4px;top:43.02px;font-family:'Liberation Sans',sans-serif;font-size:11.8px;font-weight:400;color:#1a1a1a;line-height:1.149;white-space:nowrap;-webkit-text-stroke:0.25px #1a1a1a;">Levels</div>
<svg style="position:absolute;left:467px;top:42px" width="14" height="14"><path d="M1,1 L13,13 M13,1 L1,13" stroke="#111" stroke-width="1.1"/></svg>
<svg style="position:absolute;left:67.1px;top:69.1px" width="25.5" height="27" viewBox="0 0 25.5 27"><defs><linearGradient id="hg1" x1="0" x2="1"><stop offset="0" stop-color="#777"/><stop offset="1" stop-color="#ddd"/></linearGradient><linearGradient id="hg2" x1="0" x2="1"><stop offset="0" stop-color="#555"/><stop offset="0.6" stop-color="#ccc"/><stop offset="1" stop-color="#eee"/></linearGradient></defs><rect x="0.6" y="0.6" width="24.4" height="25.4" rx="1.6" fill="#ececec" stroke="#6a6a6a" stroke-width="1.2"/><path d="M3.36,13.76 L3.36,6.72 L4.16,6.40 L6.08,10.56 L9.28,7.36 L10.56,8.96 L11.84,6.40 L13.44,8.96 L15.36,12.48 L16.96,12.16 L19.20,5.44 L20.80,3.52 L21.60,3.52 L21.60,13.76 Z" fill="#2f63ad"/><rect x="2.5" y="16" width="20" height="1.8" fill="url(#hg1)"/><rect x="6.5" y="19" width="10" height="3" fill="url(#hg2)"/><path d="M2.5,20.5 L4.5,19 L4.5,22 Z M22.5,20.5 L20.5,19 L20.5,22 Z" fill="#444"/></svg>
<div style="position:absolute;left:100.9px;top:72.18px;font-family:'Liberation Sans',sans-serif;font-size:15.6px;font-weight:700;color:#000;line-height:1.149;white-space:nowrap;-webkit-text-stroke:0.1px #000;">Adjust Color Levels</div>
<div style="position:absolute;left:100.9px;top:91.89px;font-family:'Liberation Sans',sans-serif;font-size:11.5px;font-weight:400;color:#111;line-height:1.149;white-space:nowrap;-webkit-text-stroke:0.25px #111;">Water Texture-5 (hubmapmaking.xcf)</div>
<svg style="position:absolute;left:441.6px;top:69.1px" width="39" height="39" viewBox="0 0 39 39"><defs><pattern id="tchk" width="9.4" height="9.4" patternUnits="userSpaceOnUse"><rect width="9.4" height="9.4" fill="#a6a6a6"/><rect x="4.7" width="4.7" height="4.7" fill="#6e6e6e"/><rect y="4.7" width="4.7" height="4.7" fill="#6e6e6e"/></pattern><radialGradient id="tnav" cx="0.4" cy="0.4" r="0.7"><stop offset="0" stop-color="#14285e"/><stop offset="1" stop-color="#0a1845"/></radialGradient></defs><rect width="39" height="39" fill="url(#tnav)"/><path d="M15.3,3.8 L23.3,1.1 L35.8,0.7 L36.7,6 L37.1,22.4 L34.4,23.3 L30,21.8 L29.1,16.2 L24.7,13.6 L22,14.4 L18,12.7 L15.3,7.8 Z" fill="url(#tchk)"/><path d="M1.6,26 L6.9,21.6 L14,23.3 L20.2,26.9 L21.6,31.3 L18.4,37.6 L1.6,37.6 Z" fill="url(#tchk)"/><rect x="0.7" y="0.7" width="37.6" height="37.6" fill="none" stroke="#111" stroke-width="1.4"/></svg>
<div style="position:absolute;left:61.5px;top:111.3px;width:426px;height:1.3px;box-sizing:border-box;background:#a8a8a8;"></div>
<div style="position:absolute;left:71.9px;top:126.73px;font-family:'Liberation Sans',sans-serif;font-size:12.9px;font-weight:400;color:#111;line-height:1.149;white-space:nowrap;-webkit-text-stroke:0.25px #111;">Pre<span style="text-decoration:underline;text-underline-offset:2px">s</span>ets:</div>
<div style="position:absolute;left:129.3px;top:120.3px;width:291.2px;height:25.39999999999999px;box-sizing:border-box;background:#fff;border:1.5px solid #b5b5b5;"></div>
<div style="position:absolute;left:400.1px;top:120.3px;width:20.4px;height:25.4px;box-sizing:border-box;background:#e2e2e2;border:2px solid #b5b5b5;"></div>
<svg style="position:absolute;left:404.5px;top:129.5px" width="13" height="8"><path d="M1,1 L6.5,6.5 L12,1" fill="none" stroke="#555" stroke-width="1.4"/></svg>
<svg style="position:absolute;left:434px;top:126.5px" width="14" height="14"><path d="M7,1.5 L7,12.5 M1.5,7 L12.5,7" stroke="#4a7cc0" stroke-width="3.4"/></svg>
<div style="position:absolute;left:460px;top:125.7px;width:13px;height:12.5px;box-sizing:border-box;border:1.3px solid #888;border-radius:3px;"></div>
<svg style="position:absolute;left:463px;top:128.5px" width="8" height="8"><path d="M1,3.5 L6.5,0.5 L6.5,6.5Z" fill="#777"/></svg>
<div style="position:absolute;left:68.8px;top:161.24px;font-family:'Liberation Sans',sans-serif;font-size:13px;font-weight:400;color:#111;line-height:1.149;white-space:nowrap;-webkit-text-stroke:0.25px #111;">Chan<span style="text-decoration:underline;text-underline-offset:2px">n</span>el:</div>
<div style="position:absolute;left:129.3px;top:153.7px;width:97.29999999999998px;height:28.80000000000001px;box-sizing:border-box;background:#fff;border:1.5px solid #b5b5b5;"></div>
<div style="position:absolute;left:206.8px;top:153.7px;width:19.8px;height:28.8px;box-sizing:border-box;background:#dcdcdc;border:1.5px solid #b5b5b5;"></div>
<svg style="position:absolute;left:210.5px;top:165px" width="13" height="8"><path d="M1,1 L6.5,6.5 L12,1" fill="none" stroke="#555" stroke-width="1.4"/></svg>
<div style="position:absolute;left:133px;top:161.05px;font-family:'Liberation Sans',sans-serif;font-size:13.2px;font-weight:400;color:#111;line-height:1.149;white-space:nowrap;-webkit-text-stroke:0.25px #111;">Value</div>
<div style="position:absolute;left:235.2px;top:155px;width:95.5px;height:26.5px;box-sizing:border-box;background:#e1e1e1;border:1px solid #adadad;"></div>
<div style="position:absolute;left:240.7px;top:161.28px;font-family:'Liberation Sans',sans-serif;font-size:12.95px;font-weight:400;color:#111;line-height:1.149;white-space:nowrap;-webkit-text-stroke:0.25px #111;">R<span style="text-decoration:underline;text-underline-offset:2px">e</span>set Channel</div>
<div style="position:absolute;left:421px;top:153.4px;width:29.8px;height:28.3px;box-sizing:border-box;background:#c9e0f5;border:1px solid #9ccbf3;"></div>
<svg style="position:absolute;left:426.7px;top:159px" width="18.5" height="18.5"><rect x="0.75" y="0.75" width="17" height="17" fill="#fff" stroke="#888" stroke-width="1.5"/><rect x="3" y="3" width="12.5" height="9" fill="#e8e8e8"/><path d="M3,3 L4,3 L5,9 L7,7 L10,7 L13,9 L15,11.5 L15,12 L3,12 Z" fill="#2d62ad"/><rect x="3" y="13.5" width="12.5" height="1.2" fill="#777"/></svg>
<svg style="position:absolute;left:456.4px;top:159px" width="18.5" height="18.5"><rect x="0.75" y="0.75" width="17" height="17" fill="#fff" stroke="#888" stroke-width="1.5"/><rect x="3" y="3" width="12.5" height="9" fill="#e8e8e8"/><path d="M3,3 L4,3 L5,6 L7,5 L10,4.5 L13,6 L15,9 L15,12 L3,12 Z" fill="#2d62ad"/><rect x="3" y="13.5" width="12.5" height="1.2" fill="#777"/></svg>
<div style="position:absolute;left:68.8px;top:191.64px;font-family:'Liberation Sans',sans-serif;font-size:13.1px;font-weight:700;color:#000;line-height:1.149;white-space:nowrap;-webkit-text-stroke:0.1px #000;">Input Levels</div>
<div style="position:absolute;left:82px;top:214.3px;width:398px;height:108px;box-sizing:border-box;border-top:1.5px solid #a0a0a0;border-left:1.5px solid #a0a0a0;border-bottom:1.5px solid #fff;border-right:1.5px solid #fff;"></div>
<div style="position:absolute;left:85px;top:217.8px;width:392.8px;height:73.5px;box-sizing:border-box;background:#fff;border:1.5px solid #a8a8a8;"></div>
<div style="position:absolute;left:163.9px;top:218.5px;width:1.3px;height:72px;box-sizing:border-box;background:#a8a8a8;"></div>
<div style="position:absolute;left:241.8px;top:218.5px;width:1.3px;height:72px;box-sizing:border-box;background:#a8a8a8;"></div>
<div style="position:absolute;left:320.4px;top:218.5px;width:1.3px;height:72px;box-sizing:border-box;background:#a8a8a8;"></div>
<div style="position:absolute;left:398.9px;top:218.5px;width:1.3px;height:72px;box-sizing:border-box;background:#a8a8a8;"></div>
<svg style="position:absolute;left:0;top:0" width="500" height="300"><path d="M170.0,290.8 L171.8,286.2 L175.5,278.8 L177.3,272.4 L180.1,263.3 L181.0,253.2 L182.8,252.3 L183.8,244.9 L186.5,241.3 L187.4,223.8 L190.2,223.8 L190.5,262.3 L191.3,219.3 L192.4,219.3 L192.9,262.3 L194.8,243.1 L195.7,243.1 L196.0,272.4 L198.4,272.4 L199.3,275.2 L201.2,274.3 L202.1,280.7 L204.8,276.1 L206.7,279.8 L209.4,278.8 L210.3,283.4 L214.0,278.8 L216.8,281.6 L217.7,283.4 L219.5,277.9 L220.4,286.2 L223.2,283.4 L225.0,287.1 L228.7,288.0 L233.3,289.8 L234.2,290.8 Z" fill="#000"/><rect x="236.5" y="289" width="1.5" height="2" fill="#000"/><rect x="250" y="289" width="2" height="2" fill="#000"/><rect x="258" y="289" width="2" height="2" fill="#000"/></svg>
<div style="position:absolute;left:85.7px;top:294px;width:391.6px;height:7px;box-sizing:border-box;background:linear-gradient(90deg,#2a2a2a 0%,#8a8a8a 26%,#aaaaaa 47%,#d5d5d5 75%,#ffffff 100%);"></div>
<div style="position:absolute;left:85.7px;top:301px;width:391.6px;height:7px;box-sizing:border-box;background:linear-gradient(90deg,#000 0%,#333 26%,#5a5a5a 47%,#b0b0b0 75%,#ffffff 100%);"></div>
<svg style="position:absolute;left:84px;top:307px" width="400" height="14"><path d="M1.5,1 L1.5,12 L7.5,12 Z" fill="#000"/><path d="M119.5,1.5 L114.5,12 L124.5,12 Z" fill="#777" stroke="#444" stroke-width="1"/><path d="M392,1.5 L386.5,12 L393,12" fill="none" stroke="#111" stroke-width="1.5"/></svg>
<div style="position:absolute;left:83.5px;top:326.5px;width:33.7px;height:33.89999999999998px;box-sizing:border-box;background:#dcdcdc;border:1px solid #adadad;"></div>
<svg style="position:absolute;left:83.5px;top:326.5px" width="34" height="34" viewBox="0 0 34 34"><ellipse cx="18" cy="23.5" rx="7" ry="2.5" fill="rgba(0,0,0,0.05)"/><path d="M20.5,14.5 L10.5,24" stroke="#1a1a1a" stroke-width="3.8" stroke-linecap="round"/><path d="M20.3,14.7 L15.5,19.2" stroke="#e6ecf2" stroke-width="2.2"/><path d="M15.7,19 L10.7,23.8" stroke="#111" stroke-width="2.2" stroke-linecap="round"/><path d="M19.2,11.8 L22.6,16.6" stroke="#111" stroke-width="2.3" stroke-linecap="round"/><path d="M21.5,13 L23.5,11" stroke="#3f6490" stroke-width="3"/><ellipse cx="24.2" cy="10.2" rx="2.8" ry="2.7" fill="#35557f" stroke="#111" stroke-width="0.9"/></svg>
<div style="position:absolute;left:121.4px;top:329.8px;width:43.099999999999994px;height:25.69999999999999px;box-sizing:border-box;background:#fff;border:1px solid #c0c0c0;"></div>
<div style="position:absolute;left:125.5px;top:336.74px;font-family:'Liberation Sans',sans-serif;font-size:13px;font-weight:400;color:#111;line-height:1.149;white-space:nowrap;-webkit-text-stroke:0.25px #111;">0</div>
<div style="position:absolute;left:166px;top:330.5px;width:11.300000000000011px;height:11.0px;box-sizing:border-box;background:#e6e6e6;border:1px solid #b4b4b4;"></div>
<svg style="position:absolute;left:167.65px;top:333.0px" width="8" height="6"><path d="M0.5,5 L4,1 L7.5,5 Z" fill="#111"/></svg>
<div style="position:absolute;left:166px;top:342.5px;width:11.300000000000011px;height:11.0px;box-sizing:border-box;background:#efefef;border:1px solid #d8d8d8;"></div>
<svg style="position:absolute;left:167.65px;top:345.0px" width="8" height="6"><path d="M0.5,1 L4,5 L7.5,1 Z" fill="#a0a0a0"/></svg>
<div style="position:absolute;left:252.5px;top:329.8px;width:44.10000000000002px;height:25.69999999999999px;box-sizing:border-box;background:#fff;border:1px solid #c0c0c0;"></div>
<div style="position:absolute;left:256.5px;top:333px;width:1.2px;height:19px;box-sizing:border-box;background:#000;"></div>
<div style="position:absolute;left:256.5px;top:336.74px;font-family:'Liberation Sans',sans-serif;font-size:13px;font-weight:400;color:#111;line-height:1.149;white-space:nowrap;-webkit-text-stroke:0.25px #111;">2.50</div>
<div style="position:absolute;left:297.5px;top:330.5px;width:11.0px;height:11.0px;box-sizing:border-box;background:#e6e6e6;border:1px solid #b4b4b4;"></div>
<svg style="position:absolute;left:299.0px;top:333.0px" width="8" height="6"><path d="M0.5,5 L4,1 L7.5,5 Z" fill="#111"/></svg>
<div style="position:absolute;left:297.5px;top:342.5px;width:11.0px;height:11.0px;box-sizing:border-box;background:#e6e6e6;border:1px solid #b4b4b4;"></div>
<svg style="position:absolute;left:299.0px;top:345.0px" width="8" height="6"><path d="M0.5,1 L4,5 L7.5,1 Z" fill="#111"/></svg>
<div style="position:absolute;left:385.2px;top:326.5px;width:34.30000000000001px;height:33.89999999999998px;box-sizing:border-box;background:#dcdcdc;border:1px solid #adadad;"></div>
<svg style="position:absolute;left:385.2px;top:326.5px" width="34" height="34" viewBox="0 0 34 34"><ellipse cx="18" cy="23.5" rx="7" ry="2.5" fill="rgba(0,0,0,0.05)"/><path d="M20.5,14.5 L10.5,24" stroke="#1a1a1a" stroke-width="3.8" stroke-linecap="round"/><path d="M20.3,14.7 L15.5,19.2" stroke="#e6ecf2" stroke-width="2.2"/><path d="M15.7,19 L10.7,23.8" stroke="#fff" stroke-width="2.2" stroke-linecap="round"/><path d="M19.2,11.8 L22.6,16.6" stroke="#111" stroke-width="2.3" stroke-linecap="round"/><path d="M21.5,13 L23.5,11" stroke="#3f6490" stroke-width="3"/><ellipse cx="24.2" cy="10.2" rx="2.8" ry="2.7" fill="#35557f" stroke="#111" stroke-width="0.9"/></svg>
<div style="position:absolute;left:423.2px;top:329.8px;width:44.0px;height:25.69999999999999px;box-sizing:border-box;background:#fff;border:1px solid #c0c0c0;"></div>
<div style="position:absolute;left:427.5px;top:336.74px;font-family:'Liberation Sans',sans-serif;font-size:13px;font-weight:400;color:#111;line-height:1.149;white-space:nowrap;-webkit-text-stroke:0.25px #111;">255</div>
<div style="position:absolute;left:468px;top:330.5px;width:11px;height:11.0px;box-sizing:border-box;background:#efefef;border:1px solid #d8d8d8;"></div>
<svg style="position:absolute;left:469.5px;top:333.0px" width="8" height="6"><path d="M0.5,5 L4,1 L7.5,5 Z" fill="#a0a0a0"/></svg>
<div style="position:absolute;left:468px;top:342.5px;width:11px;height:11.0px;box-sizing:border-box;background:#e6e6e6;border:1px solid #b4b4b4;"></div>
<svg style="position:absolute;left:469.5px;top:345.0px" width="8" height="6"><path d="M0.5,1 L4,5 L7.5,1 Z" fill="#111"/></svg>
<div style="position:absolute;left:68.8px;top:370.65px;font-family:'Liberation Sans',sans-serif;font-size:13.2px;font-weight:700;color:#000;line-height:1.149;white-space:nowrap;-webkit-text-stroke:0.1px #000;">Output Levels</div>
<div style="position:absolute;left:82.4px;top:393.6px;width:397.6px;height:31px;box-sizing:border-box;border-top:1.5px solid #a0a0a0;border-left:1.5px solid #a0a0a0;border-bottom:1.5px solid #fff;border-right:1.5px solid #fff;"></div>
<div style="position:absolute;left:85.7px;top:396.7px;width:391.6px;height:13.3px;box-sizing:border-box;background:linear-gradient(90deg,#000 0%,#1a1a1a 20%,#5a5a5a 45%,#9a9a9a 65%,#d8d8d8 85%,#fff 100%);"></div>
<svg style="position:absolute;left:84px;top:409px" width="400" height="14"><path d="M1.5,1 L1.5,12 L7.5,12 Z" fill="#000"/><path d="M392,1.5 L386.5,12 L393,12" fill="none" stroke="#111" stroke-width="1.5"/></svg>
<div style="position:absolute;left:82.4px;top:430.3px;width:43.3px;height:25.5px;box-sizing:border-box;background:#fff;border:1px solid #c0c0c0;"></div>
<div style="position:absolute;left:86.5px;top:437.04px;font-family:'Liberation Sans',sans-serif;font-size:13px;font-weight:400;color:#111;line-height:1.149;white-space:nowrap;-webkit-text-stroke:0.25px #111;">0</div>
<div style="position:absolute;left:127px;top:431.0px;width:11px;height:11.0px;box-sizing:border-box;background:#e6e6e6;border:1px solid #b4b4b4;"></div>
<svg style="position:absolute;left:128.5px;top:433.5px" width="8" height="6"><path d="M0.5,5 L4,1 L7.5,5 Z" fill="#111"/></svg>
<div style="position:absolute;left:127px;top:443.0px;width:11px;height:11.0px;box-sizing:border-box;background:#efefef;border:1px solid #d8d8d8;"></div>
<svg style="position:absolute;left:128.5px;top:445.5px" width="8" height="6"><path d="M0.5,1 L4,5 L7.5,1 Z" fill="#a0a0a0"/></svg>
<div style="position:absolute;left:423.2px;top:430.3px;width:44.0px;height:25.5px;box-sizing:border-box;background:#fff;border:1px solid #c0c0c0;"></div>
<div style="position:absolute;left:427.5px;top:437.04px;font-family:'Liberation Sans',sans-serif;font-size:13px;font-weight:400;color:#111;line-height:1.149;white-space:nowrap;-webkit-text-stroke:0.25px #111;">255</div>
<div style="position:absolute;left:468px;top:431.0px;width:11px;height:11.0px;box-sizing:border-box;background:#efefef;border:1px solid #d8d8d8;"></div>
<svg style="position:absolute;left:469.5px;top:433.5px" width="8" height="6"><path d="M0.5,5 L4,1 L7.5,5 Z" fill="#a0a0a0"/></svg>
<div style="position:absolute;left:468px;top:443.0px;width:11px;height:11.0px;box-sizing:border-box;background:#e6e6e6;border:1px solid #b4b4b4;"></div>
<svg style="position:absolute;left:469.5px;top:445.5px" width="8" height="6"><path d="M0.5,1 L4,5 L7.5,1 Z" fill="#111"/></svg>
<div style="position:absolute;left:68.8px;top:465.30px;font-family:'Liberation Sans',sans-serif;font-size:12.6px;font-weight:700;color:#000;line-height:1.149;white-space:nowrap;-webkit-text-stroke:0.1px #000;">All Channels</div>
<div style="position:absolute;left:309px;top:489px;width:39px;height:33.700000000000045px;box-sizing:border-box;background:#e1e1e1;border:1px solid #adadad;"></div>
<div style="position:absolute;left:313.5px;top:499.04px;font-family:'Liberation Sans',sans-serif;font-size:13px;font-weight:400;color:#111;line-height:1.149;white-space:nowrap;-webkit-text-stroke:0.25px #111;"><span style="text-decoration:underline;text-underline-offset:2px">A</span>uto</div>
<div style="position:absolute;left:357.3px;top:489px;width:34.5px;height:33.700000000000045px;box-sizing:border-box;background:#e1e1e1;border:1px solid #adadad;"></div>
<svg style="position:absolute;left:357.3px;top:489px" width="34" height="34" viewBox="0 0 34 34"><ellipse cx="18" cy="23.5" rx="7" ry="2.5" fill="rgba(0,0,0,0.05)"/><path d="M20.5,14.5 L10.5,24" stroke="#1a1a1a" stroke-width="3.8" stroke-linecap="round"/><path d="M20.3,14.7 L15.5,19.2" stroke="#e6ecf2" stroke-width="2.2"/><path d="M15.7,19 L10.7,23.8" stroke="#111" stroke-width="2.2" stroke-linecap="round"/><path d="M19.2,11.8 L22.6,16.6" stroke="#111" stroke-width="2.3" stroke-linecap="round"/><path d="M21.5,13 L23.5,11" stroke="#3f6490" stroke-width="3"/><ellipse cx="24.2" cy="10.2" rx="2.8" ry="2.7" fill="#35557f" stroke="#111" stroke-width="0.9"/></svg>
<div style="position:absolute;left:401.2px;top:489px;width:34.5px;height:33.700000000000045px;box-sizing:border-box;background:#e1e1e1;border:1px solid #adadad;"></div>
<svg style="position:absolute;left:401.2px;top:489px" width="34" height="34" viewBox="0 0 34 34"><ellipse cx="18" cy="23.5" rx="7" ry="2.5" fill="rgba(0,0,0,0.05)"/><path d="M20.5,14.5 L10.5,24" stroke="#1a1a1a" stroke-width="3.8" stroke-linecap="round"/><path d="M20.3,14.7 L15.5,19.2" stroke="#e6ecf2" stroke-width="2.2"/><path d="M15.7,19 L10.7,23.8" stroke="#999" stroke-width="2.2" stroke-linecap="round"/><path d="M19.2,11.8 L22.6,16.6" stroke="#111" stroke-width="2.3" stroke-linecap="round"/><path d="M21.5,13 L23.5,11" stroke="#3f6490" stroke-width="3"/><ellipse cx="24.2" cy="10.2" rx="2.8" ry="2.7" fill="#35557f" stroke="#111" stroke-width="0.9"/></svg>
<div style="position:absolute;left:445.2px;top:489px;width:34.5px;height:33.700000000000045px;box-sizing:border-box;background:#e1e1e1;border:1px solid #adadad;"></div>
<svg style="position:absolute;left:445.2px;top:489px" width="34" height="34" viewBox="0 0 34 34"><ellipse cx="18" cy="23.5" rx="7" ry="2.5" fill="rgba(0,0,0,0.05)"/><path d="M20.5,14.5 L10.5,24" stroke="#1a1a1a" stroke-width="3.8" stroke-linecap="round"/><path d="M20.3,14.7 L15.5,19.2" stroke="#e6ecf2" stroke-width="2.2"/><path d="M15.7,19 L10.7,23.8" stroke="#f4f4f4" stroke-width="2.2" stroke-linecap="round"/><path d="M19.2,11.8 L22.6,16.6" stroke="#111" stroke-width="2.3" stroke-linecap="round"/><path d="M21.5,13 L23.5,11" stroke="#3f6490" stroke-width="3"/><ellipse cx="24.2" cy="10.2" rx="2.8" ry="2.7" fill="#35557f" stroke="#111" stroke-width="0.9"/></svg>
<div style="position:absolute;left:69.3px;top:532.8px;width:410.2px;height:34.0px;box-sizing:border-box;background:#e1e1e1;border:1px solid #adadad;"></div>
<svg style="position:absolute;left:75px;top:537px" width="23" height="25"><rect x="0.75" y="0.75" width="21.5" height="22.5" rx="1.5" fill="#fff" stroke="#555" stroke-width="1.2"/><path d="M4,4 L4,19 L19,19" fill="none" stroke="#bbb" stroke-width="1"/><path d="M9,4 L9,19 M14,4 L14,19 M4,9 L19,9 M4,14 L19,14" stroke="#ddd" stroke-width="0.8"/><path d="M4,19 L18,5" stroke="#555" stroke-width="1.2"/><path d="M12,10 L12,17 L14,15 L16,18 L17,17.3 L15.3,14.5 L18,14 Z" fill="#111"/></svg>
<div style="position:absolute;left:204.5px;top:542.19px;font-family:'Liberation Sans',sans-serif;font-size:13.05px;font-weight:400;color:#111;line-height:1.149;white-space:nowrap;-webkit-text-stroke:0.25px #111;">Edit these Settings as Curves</div>
<div style="position:absolute;left:70.2px;top:580px;width:15.099999999999994px;height:14.899999999999977px;box-sizing:border-box;background:#fff;border:1.5px solid #333;"></div>
<svg style="position:absolute;left:70.2px;top:580px" width="15.099999999999994" height="14.899999999999977"><path d="M3.019999999999999,7.747999999999989 L6.341999999999997,11.025999999999984 L12.381999999999994,3.8739999999999943" fill="none" stroke="#333" stroke-width="1.3"/></svg>
<div style="position:absolute;left:92.6px;top:579.64px;font-family:'Liberation Sans',sans-serif;font-size:13.1px;font-weight:400;color:#111;line-height:1.149;white-space:nowrap;-webkit-text-stroke:0.25px #111;"><span style="text-decoration:underline;text-underline-offset:2px">P</span>review</div>
<div style="position:absolute;left:69.3px;top:614.5px;width:95.39999999999999px;height:28.5px;box-sizing:border-box;background:#e1e1e1;border:1px solid #adadad;"></div>
<div style="position:absolute;left:103px;top:621.37px;font-family:'Liberation Sans',sans-serif;font-size:13.4px;font-weight:400;color:#111;line-height:1.149;white-space:nowrap;-webkit-text-stroke:0.25px #111;"><span style="text-decoration:underline;text-underline-offset:2px">H</span>elp</div>
<div style="position:absolute;left:174.3px;top:614.5px;width:95.39999999999998px;height:28.5px;box-sizing:border-box;background:#e1e1e1;border:1px solid #adadad;"></div>
<div style="position:absolute;left:205.5px;top:622.37px;font-family:'Liberation Sans',sans-serif;font-size:12.3px;font-weight:400;color:#111;line-height:1.149;white-space:nowrap;-webkit-text-stroke:0.25px #111;"><span style="text-decoration:underline;text-underline-offset:2px">R</span>eset</div>
<div style="position:absolute;left:279.2px;top:614.5px;width:95.40000000000003px;height:28.5px;box-sizing:border-box;background:#e1e1e1;border:2px solid #0078d7;"></div>
<div style="position:absolute;left:317.3px;top:622.28px;font-family:'Liberation Sans',sans-serif;font-size:12.4px;font-weight:400;color:#111;line-height:1.149;white-space:nowrap;-webkit-text-stroke:0.25px #111;"><span style="text-decoration:underline;text-underline-offset:2px">O</span>K</div>
<div style="position:absolute;left:384.1px;top:614.5px;width:95.39999999999998px;height:28.5px;box-sizing:border-box;background:#e1e1e1;border:1px solid #adadad;"></div>
<div style="position:absolute;left:410.9px;top:621.64px;font-family:'Liberation Sans',sans-serif;font-size:13.1px;font-weight:400;color:#111;line-height:1.149;white-space:nowrap;-webkit-text-stroke:0.25px #111;"><span style="text-decoration:underline;text-underline-offset:2px">C</span>ancel</div>
<div style="position:absolute;left:617px;top:517.8px;width:493px;height:530.9000000000001px;box-sizing:border-box;background:#f0f0f0;border:1px solid #c2ae58;box-shadow:0 0 10px 2px rgba(0,0,0,0.22);"></div>
<div style="position:absolute;left:618px;top:518.8px;width:491px;height:29.5px;box-sizing:border-box;background:#fff;"></div>
<svg style="position:absolute;left:626.5px;top:522.5px" width="20" height="17"><path d="M2,9 C2,5 4,3 7,3 L9,1 L10,3.5 L14,3.5 L17,0.5 L18,4 C19,7 19,12 16,15 C12,17 6,17 3,14 Z" fill="#666"/><path d="M4,12 C7,13 12,14 15,12 L14,15 C11,16 7,16 5,15 Z" fill="#8a7a5a"/><circle cx="8" cy="8" r="2.8" fill="#fff" stroke="#222" stroke-width="0.6"/><circle cx="13.5" cy="8" r="2.8" fill="#fff" stroke="#222" stroke-width="0.6"/><circle cx="8.6" cy="8.3" r="1.1" fill="#111"/><circle cx="14" cy="8.3" r="1.1" fill="#111"/><circle cx="2" cy="9.5" r="1.8" fill="#444"/></svg>
<div style="position:absolute;left:651.6px;top:526.05px;font-family:'Liberation Sans',sans-serif;font-size:13.2px;font-weight:400;color:#1a1a1a;line-height:1.149;white-space:nowrap;-webkit-text-stroke:0.25px #1a1a1a;">Solid Noise</div>
<svg style="position:absolute;left:1088.5px;top:526.5px" width="14" height="14"><path d="M1,1 L13,13 M13,1 L1,13" stroke="#111" stroke-width="1.1"/></svg>
<div style="position:absolute;left:634.4px;top:564.8px;width:235.1px;height:234.7px;box-sizing:border-box;border-top:1.5px solid #a0a0a0;border-left:1.5px solid #a0a0a0;border-bottom:1.5px solid #fff;border-right:1.5px solid #fff;"></div>
<svg style="position:absolute;left:636.5px;top:567.2px" width="231.3" height="231.3" viewBox="0 0 231.3 231.3">
<defs>
<pattern id="pchk" width="18.4889" height="18.4889" patternUnits="userSpaceOnUse"><rect width="18.4889" height="18.4889" fill="#999"/><rect x="9.2444" width="9.2444" height="9.2444" fill="#666"/><rect y="9.2444" width="9.2444" height="9.2444" fill="#666"/></pattern>
<filter id="blur" x="-20%" y="-20%" width="140%" height="140%"><feGaussianBlur stdDeviation="5"/></filter><filter id="sblur" x="-30%" y="-30%" width="160%" height="160%"><feGaussianBlur stdDeviation="2"/></filter><linearGradient id="spk" x1="0.2" y1="0" x2="0.6" y2="1"><stop offset="0" stop-color="#151515"/><stop offset="1" stop-color="#404040" stop-opacity="0.6"/></linearGradient><filter id="turb" x="0" y="0" width="100%" height="100%" color-interpolation-filters="sRGB"><feTurbulence type="fractalNoise" baseFrequency="0.045" numOctaves="3" seed="7"/><feColorMatrix type="matrix" values="1 0 0 0 0  1 0 0 0 0  1 0 0 0 0  0 0 0 0 1"/></filter>
</defs>
<rect width="231.3" height="231.3" fill="#646464"/>
<g filter="url(#blur)">
<ellipse cx="50" cy="25" rx="48" ry="30" fill="#828282"/>
<ellipse cx="93" cy="99" rx="12" ry="10" fill="#7a7a7a"/>
<ellipse cx="124" cy="95" rx="12" ry="8" fill="#787878"/>
<ellipse cx="8" cy="105" rx="13" ry="38" fill="#2e2e2e"/>
<ellipse cx="16" cy="85" rx="10" ry="10" fill="#1a1a1a"/>
<path d="M50,50 L88,88" stroke="#444" stroke-width="8" stroke-linecap="round"/>
<path d="M86,66 C100,95 108,110 120,118 C140,128 160,140 168,170 C172,190 168,205 160,215 C150,225 130,230 112,234" fill="none" stroke="#272727" stroke-width="17" stroke-linecap="round"/>
<path d="M130,122 C150,132 165,150 170,180" fill="none" stroke="#111" stroke-width="6" stroke-linecap="round"/>
<path d="M28,120 C50,126 80,140 122,155" fill="none" stroke="#a2a2a2" stroke-width="16" stroke-linecap="round"/>
<ellipse cx="208" cy="188" rx="30" ry="48" fill="#a4a4a4"/>
<ellipse cx="148" cy="178" rx="15" ry="26" fill="#9a9a9a"/>
<ellipse cx="120" cy="4" rx="14" ry="8" fill="#1e1e1e"/>
<ellipse cx="222" cy="18" rx="10" ry="18" fill="#454545"/>
<ellipse cx="222" cy="42" rx="10" ry="8" fill="#999"/>
<ellipse cx="4" cy="222" rx="6" ry="14" fill="#2a2a2a"/>
<ellipse cx="195" cy="140" rx="10" ry="6" fill="#505050"/>
<ellipse cx="160" cy="110" rx="13" ry="22" fill="#2e2e2e"/>
</g>
<path d="M142.2,67.9 L158.2,77.7 L168.8,90.1 L169.7,99 L172,118 L150,110 L136,92 Z" fill="url(#spk)" filter="url(#sblur)"/>
<rect width="231.3" height="231.3" filter="url(#turb)" style="mix-blend-mode:overlay" opacity="0.45"/>
<path d="M133.5,0.0 L213.4,0.0 L211.2,15.2 L209.0,34.8 L220.0,39.2 L231.3,45.7 L231.3,143.7 L220.0,141.5 L206.9,135.0 L196.0,126.3 L186.0,128.0 L177.7,130.1 L175.9,126.6 L175.1,113.2 L169.7,99.0 L168.8,90.1 L158.2,77.7 L145.7,68.4 L142.2,67.9 L140.4,84.8 L129.7,81.2 L108.4,74.1 L101.3,67.9 L88.8,65.2 L88.5,57.8 L87.7,47.8 L83.5,36.1 L80.2,27.0 L83.5,18.6 L91.0,11.1 L93.5,7.4 L100.2,6.1 L105.2,7.8 L106.8,17.8 L113.5,14.5 L120.2,11.1 L130.2,10.3 L131.8,6.1 Z" fill="url(#pchk)"/>
<path d="M0.0,154.8 L6.5,147.8 L14.7,140.8 L19.3,133.8 L27.5,123.3 L38.0,123.3 L46.2,135.0 L64.8,137.3 L81.2,133.8 L88.2,145.5 L92.8,154.8 L104.5,159.5 L119.7,158.3 L126.7,168.8 L130.2,179.3 L125.5,189.8 L111.5,194.5 L110.3,203.8 L102.2,215.5 L101.0,224.8 L90.5,221.3 L75.3,217.8 L66.0,224.8 L64.8,232.0 L6.5,232.0 L8.8,215.5 L3.0,203.8 L0.0,202.7 Z" fill="url(#pchk)"/>
<path d="M41,176 L52,180 L50,188 L41,186 L39,180 Z M32,178 L35,177 L34,187 L31,188 Z" fill="#454545"/>
</svg>
<div style="position:absolute;left:636.3px;top:809.3px;width:14.700000000000045px;height:14.0px;box-sizing:border-box;background:#fff;border:1.5px solid #333;"></div>
<svg style="position:absolute;left:636.3px;top:809.3px" width="14.700000000000045" height="14.0"><path d="M2.9400000000000093,7.28 L6.174000000000019,10.36 L12.054000000000036,3.64" fill="none" stroke="#333" stroke-width="1.3"/></svg>
<div style="position:absolute;left:658.5px;top:810.14px;font-family:'Liberation Sans',sans-serif;font-size:13.1px;font-weight:400;color:#111;line-height:1.149;white-space:nowrap;-webkit-text-stroke:0.25px #111;"><span style="text-decoration:underline;text-underline-offset:2px">P</span>review</div>
<div style="position:absolute;left:632.1px;top:852.25px;font-family:'Liberation Sans',sans-serif;font-size:13.2px;font-weight:400;color:#111;line-height:1.149;white-space:nowrap;-webkit-text-stroke:0.25px #111;"><span style="text-decoration:underline;text-underline-offset:2px">R</span>andom seed:</div>
<div style="position:absolute;left:725.7px;top:846.7px;width:78.59999999999991px;height:25.59999999999991px;box-sizing:border-box;background:#fff;border:1px solid #c0c0c0;"></div>
<div style="position:absolute;left:729.7px;top:853.32px;font-family:'Liberation Sans',sans-serif;font-size:12.35px;font-weight:400;color:#111;line-height:1.149;white-space:nowrap;-webkit-text-stroke:0.25px #111;">4025963239</div>
<div style="position:absolute;left:798.5px;top:850px;width:1.2px;height:19px;box-sizing:border-box;background:#000;"></div>
<div style="position:absolute;left:806px;top:847.5px;width:10.5px;height:11.0px;box-sizing:border-box;background:#e6e6e6;border:1px solid #b4b4b4;"></div>
<svg style="position:absolute;left:807.25px;top:850.0px" width="8" height="6"><path d="M0.5,5 L4,1 L7.5,5 Z" fill="#111"/></svg>
<div style="position:absolute;left:806px;top:859.5px;width:10.5px;height:11.0px;box-sizing:border-box;background:#e6e6e6;border:1px solid #b4b4b4;"></div>
<svg style="position:absolute;left:807.25px;top:862.0px" width="8" height="6"><path d="M0.5,1 L4,5 L7.5,1 Z" fill="#111"/></svg>
<div style="position:absolute;left:824.2px;top:846.7px;width:73.5px;height:25.59999999999991px;box-sizing:border-box;background:#e1e1e1;border:1px solid #adadad;"></div>
<div style="position:absolute;left:831.2px;top:852.83px;font-family:'Liberation Sans',sans-serif;font-size:12.9px;font-weight:400;color:#111;line-height:1.149;white-space:nowrap;-webkit-text-stroke:0.25px #111;"><span style="text-decoration:underline;text-underline-offset:2px">N</span>ew Seed</div>
<div style="position:absolute;left:906px;top:852px;width:15px;height:14.600000000000023px;box-sizing:border-box;background:#fff;border:1.5px solid #333;"></div>
<div style="position:absolute;left:928px;top:852.27px;font-family:'Liberation Sans',sans-serif;font-size:13.4px;font-weight:400;color:#111;line-height:1.149;white-space:nowrap;-webkit-text-stroke:0.25px #111;"><span style="text-decoration:underline;text-underline-offset:2px">R</span>andomize</div>
<div style="position:absolute;left:1009px;top:852px;width:15px;height:14.600000000000023px;box-sizing:border-box;background:#fff;border:1.5px solid #333;"></div>
<svg style="position:absolute;left:1009px;top:852px" width="15" height="14.600000000000023"><path d="M3.0,7.592000000000012 L6.3,10.804000000000016 L12.299999999999999,3.796000000000006" fill="none" stroke="#333" stroke-width="1.3"/></svg>
<div style="position:absolute;left:1032px;top:851.73px;font-family:'Liberation Sans',sans-serif;font-size:14px;font-weight:400;color:#111;line-height:1.149;white-space:nowrap;-webkit-text-stroke:0.25px #111;">T<span style="text-decoration:underline;text-underline-offset:2px">u</span>rbulent</div>
<div style="position:absolute;left:632px;top:887.05px;font-family:'Liberation Sans',sans-serif;font-size:13.2px;font-weight:400;color:#111;line-height:1.149;white-space:nowrap;-webkit-text-stroke:0.25px #111;"><span style="text-decoration:underline;text-underline-offset:2px">D</span>etail:</div>
<div style="position:absolute;left:725.7px;top:881.2px;width:43.59999999999991px;height:25.399999999999977px;box-sizing:border-box;background:#fff;border:1px solid #c0c0c0;"></div>
<div style="position:absolute;left:729.7px;top:888.10px;font-family:'Liberation Sans',sans-serif;font-size:12.6px;font-weight:400;color:#111;line-height:1.149;white-space:nowrap;-webkit-text-stroke:0.25px #111;">15</div>
<div style="position:absolute;left:771px;top:882.0px;width:11px;height:11.0px;box-sizing:border-box;background:#efefef;border:1px solid #d8d8d8;"></div>
<svg style="position:absolute;left:772.5px;top:884.5px" width="8" height="6"><path d="M0.5,5 L4,1 L7.5,5 Z" fill="#a0a0a0"/></svg>
<div style="position:absolute;left:771px;top:894.0px;width:11px;height:11.0px;box-sizing:border-box;background:#e6e6e6;border:1px solid #b4b4b4;"></div>
<svg style="position:absolute;left:772.5px;top:896.5px" width="8" height="6"><path d="M0.5,1 L4,5 L7.5,1 Z" fill="#111"/></svg>
<div style="position:absolute;left:1009px;top:886.4px;width:15px;height:15.0px;box-sizing:border-box;background:#fff;border:1.5px solid #333;"></div>
<div style="position:absolute;left:1032px;top:886.69px;font-family:'Liberation Sans',sans-serif;font-size:13.6px;font-weight:400;color:#111;line-height:1.149;white-space:nowrap;-webkit-text-stroke:0.25px #111;">T<span style="text-decoration:underline;text-underline-offset:2px">i</span>lable</div>
<div style="position:absolute;left:632px;top:921.69px;font-family:'Liberation Sans',sans-serif;font-size:12.5px;font-weight:400;color:#111;line-height:1.149;white-space:nowrap;-webkit-text-stroke:0.25px #111;"><span style="text-decoration:underline;text-underline-offset:2px">X</span> size:</div>
<div style="position:absolute;left:727.8px;top:926.9px;width:268.2px;height:2px;box-sizing:border-box;background:#d8d8d8;"></div>
<div style="position:absolute;left:757.7px;top:917.8px;width:12.1px;height:18.700000000000045px;box-sizing:border-box;background:#0078d7;"></div>
<div style="position:absolute;left:1005.6px;top:914.4px;width:75.39999999999998px;height:26.200000000000045px;box-sizing:border-box;background:#fff;border:1px solid #c0c0c0;"></div>
<div style="position:absolute;left:1009.5px;top:921.20px;font-family:'Liberation Sans',sans-serif;font-size:12.6px;font-weight:400;color:#111;line-height:1.149;white-space:nowrap;-webkit-text-stroke:0.25px #111;">2.0</div>
<div style="position:absolute;left:1082.4px;top:915.4px;width:11.199999999999818px;height:11.100000000000023px;box-sizing:border-box;background:#e6e6e6;border:1px solid #b4b4b4;"></div>
<svg style="position:absolute;left:1084.0px;top:917.95px" width="8" height="6"><path d="M0.5,5 L4,1 L7.5,5 Z" fill="#111"/></svg>
<div style="position:absolute;left:1082.4px;top:927.5px;width:11.199999999999818px;height:11.100000000000023px;box-sizing:border-box;background:#e6e6e6;border:1px solid #b4b4b4;"></div>
<svg style="position:absolute;left:1084.0px;top:930.05px" width="8" height="6"><path d="M0.5,1 L4,5 L7.5,1 Z" fill="#111"/></svg>
<div style="position:absolute;left:632px;top:955.09px;font-family:'Liberation Sans',sans-serif;font-size:12.5px;font-weight:400;color:#111;line-height:1.149;white-space:nowrap;-webkit-text-stroke:0.25px #111;"><span style="text-decoration:underline;text-underline-offset:2px">Y</span> size:</div>
<div style="position:absolute;left:727.8px;top:960.5px;width:268.2px;height:2px;box-sizing:border-box;background:#d8d8d8;"></div>
<div style="position:absolute;left:757.7px;top:951.2px;width:12.1px;height:18.699999999999932px;box-sizing:border-box;background:#0078d7;"></div>
<div style="position:absolute;left:1005.6px;top:948px;width:75.39999999999998px;height:26.399999999999977px;box-sizing:border-box;background:#fff;border:1px solid #c0c0c0;"></div>
<div style="position:absolute;left:1009.5px;top:955.00px;font-family:'Liberation Sans',sans-serif;font-size:12.6px;font-weight:400;color:#111;line-height:1.149;white-space:nowrap;-webkit-text-stroke:0.25px #111;">2.0</div>
<div style="position:absolute;left:1082.4px;top:949.0px;width:11.199999999999818px;height:11.199999999999989px;box-sizing:border-box;background:#e6e6e6;border:1px solid #b4b4b4;"></div>
<svg style="position:absolute;left:1084.0px;top:951.6px" width="8" height="6"><path d="M0.5,5 L4,1 L7.5,5 Z" fill="#111"/></svg>
<div style="position:absolute;left:1082.4px;top:961.2px;width:11.199999999999818px;height:11.199999999999989px;box-sizing:border-box;background:#e6e6e6;border:1px solid #b4b4b4;"></div>
<svg style="position:absolute;left:1084.0px;top:963.8000000000001px" width="8" height="6"><path d="M0.5,1 L4,5 L7.5,1 Z" fill="#111"/></svg>
<div style="position:absolute;left:633.1px;top:1004px;width:95.89999999999998px;height:28.299999999999955px;box-sizing:border-box;background:#e1e1e1;border:1px solid #adadad;"></div>
<div style="position:absolute;left:666.5px;top:1010.87px;font-family:'Liberation Sans',sans-serif;font-size:13.4px;font-weight:400;color:#111;line-height:1.149;white-space:nowrap;-webkit-text-stroke:0.25px #111;"><span style="text-decoration:underline;text-underline-offset:2px">H</span>elp</div>
<div style="position:absolute;left:892.9px;top:1003.8px;width:94.60000000000002px;height:28.200000000000045px;box-sizing:border-box;background:#e1e1e1;border:2px solid #0078d7;"></div>
<div style="position:absolute;left:930.5px;top:1011.78px;font-family:'Liberation Sans',sans-serif;font-size:12.4px;font-weight:400;color:#111;line-height:1.149;white-space:nowrap;-webkit-text-stroke:0.25px #111;"><span style="text-decoration:underline;text-underline-offset:2px">O</span>K</div>
<div style="position:absolute;left:997.5px;top:1003.8px;width:96.25px;height:28.200000000000045px;box-sizing:border-box;background:#e1e1e1;border:1px solid #adadad;"></div>
<div style="position:absolute;left:1024.5px;top:1011.14px;font-family:'Liberation Sans',sans-serif;font-size:13.1px;font-weight:400;color:#111;line-height:1.149;white-space:nowrap;-webkit-text-stroke:0.25px #111;"><span style="text-decoration:underline;text-underline-offset:2px">C</span>ancel</div>
<div style="position:absolute;left:485.5px;top:1047.8px;width:276.4px;height:68.9px;box-sizing:border-box;background:rgba(0,0,0,0.8);"></div>
<svg style="position:absolute;left:485.5px;top:1047.8px" width="277" height="69"><path d="M45.5,34 L22.5,34 M33.5,23.5 L23,34 L33.5,44.5" fill="none" stroke="#fff" stroke-width="1.8"/><rect x="94.5" y="26" width="20" height="16" fill="none" stroke="#7a7a7a" stroke-width="1.6"/><rect x="101" y="30" width="8" height="3" fill="none" stroke="#7a7a7a" stroke-width="1.4"/><path d="M92,26 L92,46 L100,46 M97,43 L100,46 L97,49" fill="none" stroke="#7a7a7a" stroke-width="1.6"/><path d="M162.5,26.5 L180.5,26.5 M167,26 L167,23.5 L176,23.5 L176,26 M164.5,27 L165.5,45.5 L177.5,45.5 L178.5,27 M168.5,31 L168.5,42 M171.5,31 L171.5,42 M174.5,31 L174.5,42" fill="none" stroke="#fff" stroke-width="1.6"/><path d="M230,34 L253,34 M242,23.5 L252.5,34 L242,44.5" fill="none" stroke="#7a7a7a" stroke-width="1.8"/></svg>
</body></html>
